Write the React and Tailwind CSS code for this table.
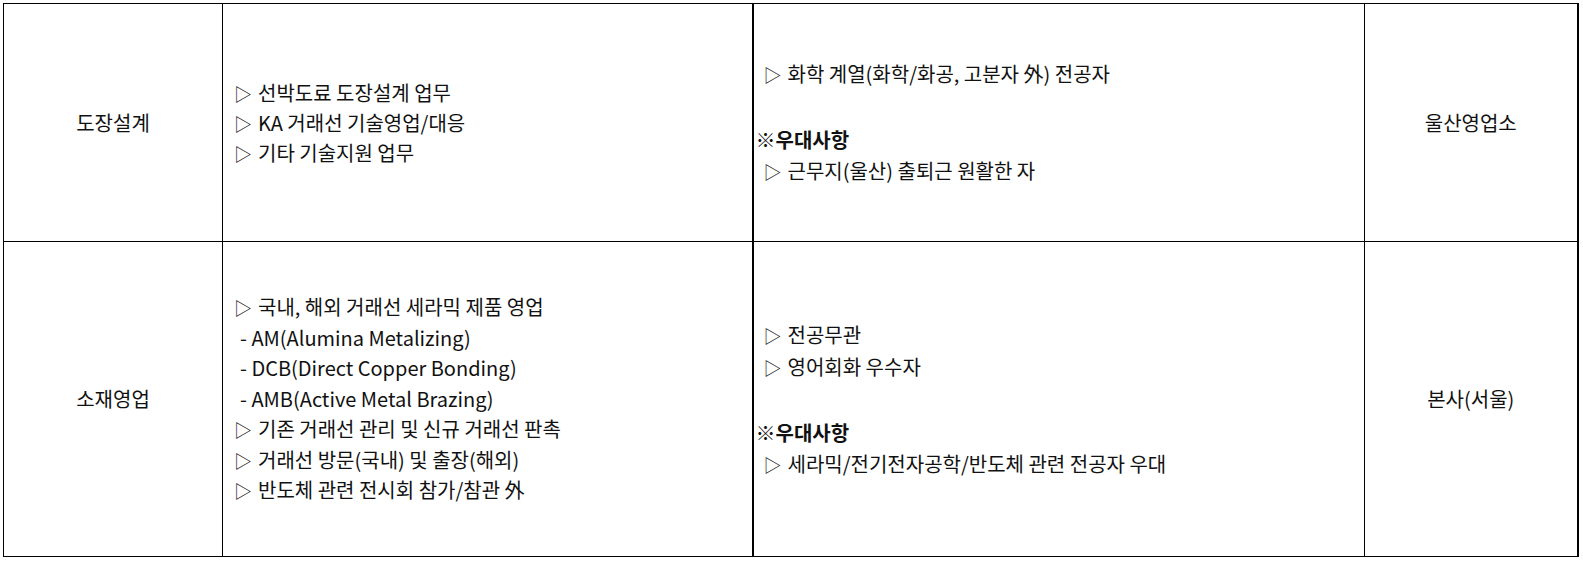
const font = { fontFamily: '"Noto Sans CJK KR", "Noto Sans", sans-serif' }

const rows = [
  {
    name: '도장설계',
    duties: ['▷ 선박도료 도장설계 업무', '▷ KA 거래선 기술영업/대응', '▷ 기타 기술지원 업무'],
    dutyLeading: 'leading-[29px]',
    reqs: ['▷ 화학 계열(화학/화공, 고분자 外) 전공자'],
    prefs: ['▷ 근무지(울산) 출퇴근 원활한 자'],
    place: '울산영업소',
    height: 'h-[238px]',
  },
  {
    name: '소재영업',
    duties: [
      '▷ 국내, 해외 거래선 세라믹 제품 영업',
      '- AM(Alumina Metalizing)',
      '- DCB(Direct Copper Bonding)',
      '- AMB(Active Metal Brazing)',
      '▷ 기존 거래선 관리 및 신규 거래선 판촉',
      '▷ 거래선 방문(국내) 및 출장(해외)',
      '▷ 반도체 관련 전시회 참가/참관 外',
    ],
    dutyLeading: 'leading-[30.5px]',
    reqs: ['▷ 전공무관', '▷ 영어회화 우수자'],
    prefs: ['▷ 세라믹/전기전자공학/반도체 관련 전공자 우대'],
    place: '본사(서울)',
    height: 'h-[315px]',
  },
]

// ▷ 글머리는 본문보다 살짝 작게
function Line({ text, className = '' }) {
  if (!text.startsWith('▷')) return <div className={className}>{text}</div>
  return (
    <div className={className}>
      <span className="mr-[6px] inline-block text-[18px] text-[#222]">▷</span>
      {text.slice(2)}
    </div>
  )
}

export default function App() {
  return (
    <div className="min-h-[562px] bg-white pl-[3px] pt-[3px] text-[20px] text-[#111]" style={font}>
      <table className="table-fixed border-collapse">
        <colgroup>
          <col className="w-[219px]" />
          <col className="w-[530px]" />
          <col className="w-[612px]" />
          <col className="w-[213px]" />
        </colgroup>
        <tbody>
          {rows.map((r) => (
            <tr key={r.name} className={r.height}>
              <td className="border border-black text-center align-middle">{r.name}</td>
              <td className={`border border-black pl-[11px] align-middle ${r.dutyLeading}`}>
                {r.duties.map((d) => (
                  <Line key={d} text={d} className={d.startsWith('-') ? 'pl-[6px]' : ''} />
                ))}
              </td>
              <td className="border border-black border-l-2 pl-[2px] align-middle leading-[31px]">
                {r.reqs.map((d) => (
                  <Line key={d} text={d} className="pl-[8px]" />
                ))}
                <div className="h-[34px]" />
                <div className="font-bold">※우대사항</div>
                {r.prefs.map((d) => (
                  <Line key={d} text={d} className="pl-[8px]" />
                ))}
              </td>
              <td className="border border-black border-r-2 text-center align-middle">{r.place}</td>
            </tr>
          ))}
        </tbody>
      </table>
    </div>
  )
}
